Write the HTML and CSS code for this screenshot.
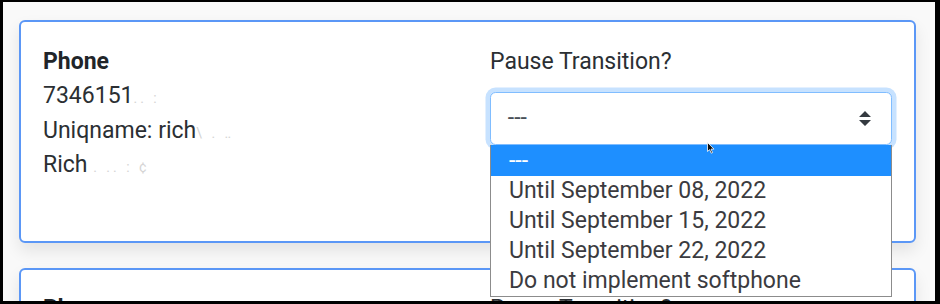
FILE: index.html
```html
<!DOCTYPE html>
<html>
<head>
<meta charset="utf-8">
<link rel="stylesheet" href="styles.css">
</head>
<body>
<div class="frame">
  <div class="page">
    <div class="card">
      <div class="row">
        <div class="col">
          <div class="title">Phone</div>
          <div class="line">7346151<span class="blur">.. :</span></div>
          <div class="line">Uniqname: rich<span class="blur">\  .  ‥</span></div>
          <div class="line">Rich <span class="blur">. .. : ¢</span></div>
        </div>
        <div class="col">
          <div class="label">Pause Transition?</div>
          <div class="select-wrap">
            <div class="select">
              <span>---</span>
              <svg class="arrows" viewBox="0 0 4 5" width="12" height="15"><path d="M2 0L0 2h4zm0 5L0 3h4z" fill="#343a40"/></svg>
            </div>
            <ul class="options">
              <li class="active">---</li>
              <li>Until September 08, 2022</li>
              <li>Until September 15, 2022</li>
              <li>Until September 22, 2022</li>
              <li>Do not implement softphone</li>
            </ul>
          </div>
        </div>
      </div>
    </div>
    <div class="card">
      <div class="row">
        <div class="col">
          <div class="title">Phone</div>
        </div>
        <div class="col">
          <div class="label">Pause Transition?</div>
        </div>
      </div>
    </div>
    <svg class="cursor" viewBox="0 0 8 12" width="8" height="12"><path d="M0.5 0.5 L0.5 9.5 L2.6 7.6 L4.2 11.2 L5.6 10.6 L4 7.1 L7 7.1 Z" fill="#111" stroke="#fff" stroke-width="0.8"/></svg>
  </div>
</div>
</body>
</html>
```

FILE: styles.css
```css
html, body {
  margin: 0;
  padding: 0;
  background: #000;
}
.frame {
  width: 940px;
  height: 304px;
  padding: 2px 5px 3px 3px;
  box-sizing: border-box;
}
.page {
  position: relative;
  width: 100%;
  height: 100%;
  background: #f9f9f9;
  overflow: hidden;
  padding: 18px 19px 0 16px;
  box-sizing: border-box;
  font-family: Roboto, "Liberation Sans", sans-serif;
  font-size: 23px;
  line-height: 34.5px;
  color: #212529;
}
.card {
  background: #fff;
  border: 2px solid #5b97f6;
  border-radius: 6px;
  padding: 22.5px 22px 21px;
  height: 222.5px;
  box-sizing: border-box;
  box-shadow: 0 8px 16px rgba(0, 0, 0, 0.09);
  margin-bottom: 25px;
}
.row {
  display: grid;
  grid-template-columns: 1fr 1fr;
  column-gap: 45px;
}
.title {
  font-weight: 700;
}
.line {
  color: #2b2f33;
}
.blur {
  color: #d4d4d4;
  letter-spacing: 3px;
  font-size: 14px;
  line-height: 0;
}
.label {
  color: #2b2f33;
  margin-bottom: 13px;
}
.select-wrap {
  position: relative;
}
.select {
  height: 53px;
  box-sizing: border-box;
  border: 1.4px solid #80bdff;
  border-radius: 5.6px;
  box-shadow: 0 0 0 4.5px rgba(0, 123, 255, 0.22);
  padding: 0 20px 0 16.8px;
  display: flex;
  align-items: center;
  justify-content: space-between;
  color: #495057;
  background: #fff;
}
.arrows {
  display: block;
}
.options {
  position: absolute;
  z-index: 5;
  top: 100%;
  left: 0;
  right: 0;
  margin: 0;
  padding: 0;
  list-style: none;
  background: #fff;
  border: 1px solid #8c8c8c;
  border-top: none;
}
.options li {
  height: 30px;
  line-height: 30px;
  padding-left: 18px;
  color: #3b3b40;
}
.options li.active {
  background: #1e8fff;
  color: #fff;
  height: 31px;
  line-height: 31px;
}
.cursor {
  position: absolute;
  left: 704px;
  top: 140px;
  z-index: 10;
}
```
